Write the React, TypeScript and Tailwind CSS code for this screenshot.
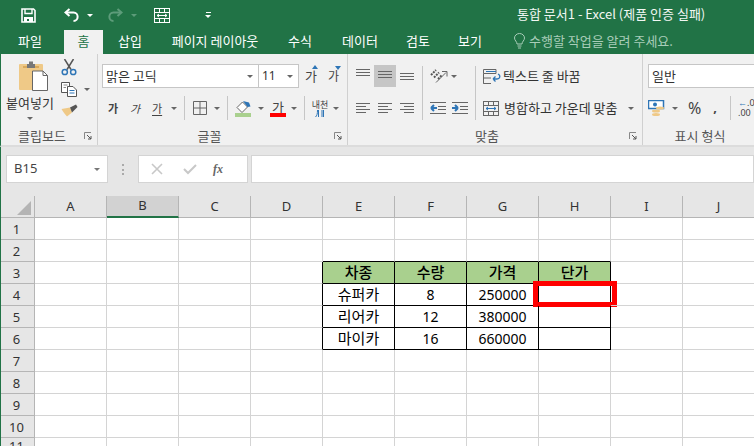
import type { ReactNode } from 'react';

const tabs = [
  { label: '파일', width: 'w-[60px]' },
  { label: '홈', width: 'w-[39px] ml-1', active: true },
  { label: '삽입', width: 'w-[54px]' },
  { label: '페이지 레이아웃', width: 'w-[116px]' },
  { label: '수식', width: 'w-[54px]' },
  { label: '데이터', width: 'w-[66px]' },
  { label: '검토', width: 'w-[50px]' },
  { label: '보기', width: 'w-[54px]' },
];

const columns = ['A', 'B', 'C', 'D', 'E', 'F', 'G', 'H', 'I', 'J'];
const rows = [1, 2, 3, 4, 5, 6, 7, 8, 9, 10, 11];

const tableData: Record<number, string[]> = {
  3: ['차종', '수량', '가격', '단가'],
  4: ['슈퍼카', '8', '250000', ''],
  5: ['리어카', '12', '380000', ''],
  6: ['마이카', '16', '660000', ''],
};

function Caret({ className = 'border-t-[#666]' }: { className?: string }) {
  return <span className={`inline-block w-0 h-0 border-x-[3px] border-x-transparent border-t-[3px] ${className}`} />;
}

function Lines({ rows: lineRows }: { rows: number[] }) {
  return (
    <svg width="16" height="14" viewBox="0 0 16 14" className="shrink-0">
      {lineRows.map((w, i) => (
        <rect key={i} x={w < 0 ? 15 + w : 1} y={2 + i * 3} width={Math.abs(w)} height="1" fill="#666" />
      ))}
    </svg>
  );
}

function GroupLabel({ children, className = '', launcher = false }: { children: ReactNode; className?: string; launcher?: boolean }) {
  return (
    <div className={`relative h-[19px] flex items-center justify-center text-[13px] leading-[16px] text-[#555] ${className}`}>
      {children}
      {launcher && (
        <svg width="8" height="8" viewBox="0 0 8 8" className="absolute right-[5px] top-[6px]">
          <path d="M0.5 7V0.5H7" fill="none" stroke="#888" />
          <path d="M3 3L7 7M7 4V7H4" fill="none" stroke="#555" />
        </svg>
      )}
    </div>
  );
}

function Divider({ className = 'h-[22px] mx-[3px]' }: { className?: string }) {
  return <span className={`w-px bg-[#c6c6c6] shrink-0 ${className}`} />;
}

function SaveIcon() {
  return (
    <svg width="15" height="15" viewBox="0 0 15 15">
      <path d="M1 1H12.5L14 2.5V14H1Z" fill="none" stroke="#fff" strokeWidth="1.6" />
      <path d="M4 1V5.5H11V1" fill="none" stroke="#fff" strokeWidth="1.4" />
      <rect x="3" y="9" width="9" height="5" fill="#fff" />
      <rect x="6" y="11" width="2" height="2" fill="#217346" />
    </svg>
  );
}

function MergeIcon({ stroke, arrow }: { stroke: string; arrow: string }) {
  return (
    <svg width="16" height="15" viewBox="0 0 16 15">
      <rect x="0.5" y="0.5" width="15" height="14" fill="none" stroke={stroke} />
      <path d="M0.5 4.5H15.5M0.5 10.5H15.5M5.5 0.5V4.5M10.5 0.5V4.5M5.5 10.5V14.5M10.5 10.5V14.5" stroke={stroke} />
      <path d="M3 7.5H13M3 7.5L5 6M3 7.5L5 9M13 7.5L11 6M13 7.5L11 9" fill="none" stroke={arrow} />
    </svg>
  );
}

function TitleBar() {
  return (
    <div className="h-[30px] flex items-center relative">
      <div className="w-[21px]" />
      <SaveIcon />
      <svg width="16" height="14" viewBox="0 0 16 14" className="ml-[28px]">
        <path d="M5.5 1L1.5 4.5L5.5 8" fill="none" stroke="#fff" strokeWidth="2" />
        <path d="M2 4.5H9.5C15 4.5 15 13 9.5 13" fill="none" stroke="#fff" strokeWidth="2" />
      </svg>
      <span className="ml-[7px] flex"><Caret className="border-t-white" /></span>
      <svg width="16" height="14" viewBox="0 0 16 14" className="ml-[14px]">
        <path d="M10.5 1L14.5 4.5L10.5 8" fill="none" stroke="#5d9c7a" strokeWidth="2" />
        <path d="M14 4.5H6.5C1 4.5 1 13 6.5 13" fill="none" stroke="#5d9c7a" strokeWidth="2" />
      </svg>
      <span className="ml-[8px] flex"><Caret className="border-t-[#5d9c7a]" /></span>
      <span className="ml-[17px] flex"><MergeIcon stroke="#fff" arrow="#fff" /></span>
      <div className="ml-[35px] flex flex-col items-center gap-[2px]">
        <span className="w-[5px] h-px bg-white" />
        <Caret className="border-t-white" />
      </div>
      <span className="ml-[306px] pb-[2px] text-[13px] text-[#f2f7f4] whitespace-nowrap">통합 문서1 - Excel (제품 인증 실패)</span>
    </div>
  );
}

function TabRow() {
  return (
    <div className="h-[24px] flex text-[13px] text-white">
      {tabs.map((t) => (
        <div
          key={t.label}
          className={`${t.width} shrink-0 flex items-center justify-center pb-[2px] whitespace-nowrap ${t.active ? 'bg-[#f1f1f1] text-[#217346]' : ''}`}
        >
          {t.label}
        </div>
      ))}
      <div className="flex items-center ml-[16px] pb-[2px] text-[#a9cdb9] whitespace-nowrap">
        <svg width="13" height="16" viewBox="0 0 13 16" className="mr-[3px]">
          <path d="M4 11C4 8.5 1.5 7.5 1.5 5A5 4.5 0 0 1 11.5 5C11.5 7.5 9 8.5 9 11Z" fill="none" stroke="#a9cdb9" />
          <path d="M4.5 13H8.5M5 15H8" stroke="#a9cdb9" />
        </svg>
        수행할 작업을 알려 주세요.
      </div>
    </div>
  );
}

function ClipboardGroup() {
  return (
    <div className="w-[97px] shrink-0 border-r border-[#d0d0d0] flex flex-col">
      <div className="h-[74px] flex">
        <div className="w-[58px] flex flex-col items-center pt-[7px]">
          <svg width="30" height="30" viewBox="0 0 30 30" className="ml-[5px]">
            <rect x="1" y="3" width="24" height="26" rx="1" fill="#efc987" />
            <rect x="5" y="5" width="16" height="2" fill="#d9a95c" />
            <path d="M9 3H11V0.5H15V3H17V7H9Z" fill="#777" />
            <path d="M14.5 10H25L29.5 14.5V29.5H14.5Z" fill="#fff" stroke="#666" />
            <path d="M25 10V14.5H29.5" fill="none" stroke="#666" />
          </svg>
          <span className="text-[13px] leading-[16px] text-[#333] mt-[4px] whitespace-nowrap">붙여넣기</span>
          <span className="mt-[6px] flex"><Caret /></span>
        </div>
        <div className="flex flex-col pt-[5px] gap-[6px] ml-[2px]">
          <svg width="16" height="17" viewBox="0 0 16 17">
            <path d="M3.5 0L10 10.5M12.5 0L6 10.5" stroke="#555" strokeWidth="1.5" />
            <circle cx="3.8" cy="13" r="2.6" fill="none" stroke="#2e75b6" strokeWidth="1.5" />
            <circle cx="12.2" cy="13" r="2.6" fill="none" stroke="#2e75b6" strokeWidth="1.5" />
          </svg>
          <div className="flex items-center gap-[7px]">
            <svg width="16" height="15" viewBox="0 0 16 15">
              <path d="M0.5 0.5H8.5V10.5H0.5Z" fill="#fff" stroke="#555" />
              <path d="M2.5 3H6.5M2.5 5.5H5" stroke="#888" />
              <path d="M6.5 4.5H12L15.5 8V14.5H6.5Z" fill="#fff" stroke="#555" />
              <path d="M8.5 8.5H13.5M8.5 11H13.5" stroke="#2e75b6" />
            </svg>
            <Caret />
          </div>
          <svg width="17" height="13" viewBox="0 0 17 13" className="mt-[1px]">
            <path d="M0.5 5L9 3.5L11 8.5L6 12.5C4 10 2 8 0.5 5Z" fill="#efc987" />
            <path d="M9 3.5L15 0.5L16.5 3L11 8.5Z" fill="#555" />
          </svg>
        </div>
      </div>
      <GroupLabel launcher className="pr-[14px]">클립보드</GroupLabel>
    </div>
  );
}

function FontGroup() {
  return (
    <div className="w-[250px] shrink-0 border-r border-[#d0d0d0] flex flex-col">
      <div className="h-[74px] pl-[4px]">
        <div className="flex items-center h-[24px] mt-[10px]">
          <div className="w-[157px] h-[24px] bg-white border border-[#c6c6c6] flex items-center pl-[3px] text-[13px] text-[#333]">
            <span className="flex-1">맑은 고딕</span>
            <span className="mr-[5px] flex"><Caret /></span>
          </div>
          <div className="w-[40px] h-[24px] bg-white border border-l-0 border-[#c6c6c6] flex items-center pl-[3px] text-[12px] text-[#333]">
            <span className="flex-1 font-['Noto_Sans']">11</span>
            <span className="mr-[5px] flex"><Caret /></span>
          </div>
          <span className="ml-[6px] text-[13px] text-[#444] relative w-[14px]">
            가
            <span className="absolute left-[7px] -top-[1px] w-0 h-0 border-x-[3px] border-x-transparent border-b-[4px] border-b-[#2e75b6]" />
          </span>
          <span className="ml-[9px] text-[12px] text-[#444] relative w-[14px]">
            가
            <span className="absolute left-[7px] -top-[1px] w-0 h-0 border-x-[3px] border-x-transparent border-t-[4px] border-t-[#2e75b6]" />
          </span>
        </div>
        <div className="flex items-center h-[24px] mt-[8px] text-[11px] text-[#444]">
          <span className="ml-[6px] w-[22px] font-bold">가</span>
          <span className="w-[22px] italic">가</span>
          <span className="w-[19px] underline underline-offset-2">가</span>
          <Caret />
          <Divider className="h-[24px] ml-[7px] mr-[8px]" />
          <svg width="14" height="14" viewBox="0 0 14 14">
            <path d="M0.5 0.5H13.5V13.5H0.5ZM7 0.5V13.5M0.5 7H13.5" fill="none" stroke="#666" />
          </svg>
          <span className="ml-[7px] flex"><Caret /></span>
          <Divider className="h-[24px] ml-[7px] mr-[7px]" />
          <svg width="17" height="17" viewBox="0 0 17 17">
            <path d="M2 7.5L7.5 2L12.5 7L7 12.5Z" fill="#fff" stroke="#666" />
            <path d="M8 1L14 2.5L15.5 6.5L12.5 7Z" fill="#2e75b6" />
            <rect x="0" y="13" width="16" height="4" fill="#a9d08e" />
          </svg>
          <span className="ml-[6px] flex"><Caret /></span>
          <div className="ml-[6px] w-[16px] flex flex-col items-center text-[13px] leading-[13px] text-[#444]">
            가
            <span className="w-[16px] h-[4px] bg-[#ff0000]" />
          </div>
          <span className="ml-[5px] flex"><Caret /></span>
          <Divider className="h-[24px] ml-[7px] mr-[7px]" />
          <div className="flex flex-col items-center w-[16px] text-[9px] leading-[10px] text-[#444] whitespace-nowrap">
            내천
            <svg width="10" height="7" viewBox="0 0 10 7">
              <path d="M2.5 0C2.5 4 2 5.500 0.500 7M3.500 0V7M7 0V7M8.500 0V7" fill="none" stroke="#2e75b6" />
            </svg>
          </div>
          <span className="ml-[5px] flex"><Caret /></span>
        </div>
      </div>
      <GroupLabel launcher className="pr-[26px]">글꼴</GroupLabel>
    </div>
  );
}

function AlignGroup() {
  return (
    <div className="w-[295px] shrink-0 border-r border-[#d0d0d0] flex flex-col">
      <div className="h-[74px] flex pl-[4px]">
        <div className="flex flex-col pt-[10px] gap-[8px]">
          <div className="flex items-center h-[24px]">
            <span className="w-[22px] flex justify-center"><span className="-mt-[4px] flex"><Lines rows={[14, 14, 14]} /></span></span>
            <span className="w-[22px] h-[22px] bg-[#c6c6c6] flex items-center justify-center"><Lines rows={[14, 14, 14]} /></span>
            <span className="w-[22px] flex justify-center"><span className="mt-[4px] flex"><Lines rows={[14, 14, 14]} /></span></span>
          </div>
          <div className="flex items-center h-[24px]">
            <span className="w-[22px] flex justify-center"><Lines rows={[14, 10, 14, 10]} /></span>
            <span className="w-[22px] flex justify-center"><Lines rows={[14, 10, 14, 10]} /></span>
            <span className="w-[22px] flex justify-center"><Lines rows={[-14, -10, -14, -10]} /></span>
          </div>
        </div>
        <Divider className="h-[54px] mt-[12px] ml-[4px] mr-[7px]" />
        <div className="flex flex-col pt-[10px] gap-[8px] w-[45px]">
          <div className="flex items-center h-[24px] gap-[3px]">
            <svg width="18" height="16" viewBox="0 0 18 16">
              <path d="M6 14.500L16 4.500M12 3.500H17V8.500" fill="none" stroke="#666" />
              <path d="M1 7L6 2M4 9.500L9 4.500M8 11L12 7" fill="none" stroke="#555" strokeWidth="2" strokeDasharray="2 1" />
            </svg>
            <Caret />
          </div>
          <div className="flex items-center h-[24px] gap-[6px]">
            <svg width="16" height="12" viewBox="0 0 16 12">
              <path d="M0 0.500H16M8 4.500H16M8 7.500H16M0 11.500H16" stroke="#666" />
              <path d="M7 6H1M1 6L4 3M1 6L4 9" fill="none" stroke="#2e75b6" strokeWidth="2" />
            </svg>
            <svg width="16" height="12" viewBox="0 0 16 12">
              <path d="M0 0.500H16M8 4.500H16M8 7.500H16M0 11.500H16" stroke="#666" />
              <path d="M0 6H6M6 6L3 3M6 6L3 9" fill="none" stroke="#2e75b6" strokeWidth="2" />
            </svg>
          </div>
        </div>
        <Divider className="h-[54px] mt-[12px] ml-[0px] mr-[7px]" />
        <div className="flex flex-col pt-[10px] gap-[8px] text-[13px] text-[#333] whitespace-nowrap">
          <div className="flex items-center h-[24px] gap-[2px]">
            <svg width="18" height="15" viewBox="0 0 18 15">
              <path d="M0.500 0.500H13V4.500H0.500ZM0.500 4.500V14.500H8M0.500 9H8M0.500 14.500H8" fill="none" stroke="#666" />
              <path d="M3 2.500H13" stroke="#2e75b6" />
              <path d="M15 5C18 6.500 17 10 14 10H10M10 10L12.500 7.500M10 10L12.500 12.500" fill="none" stroke="#2e75b6" strokeWidth="1.3" />
            </svg>
            텍스트 줄 바꿈
          </div>
          <div className="flex items-center h-[24px] gap-[5px]">
            <span className="flex"><MergeIcon stroke="#666" arrow="#2e75b6" /></span>
            <span>병합하고 가운데 맞춤</span>
            <span className="ml-[6px] flex"><Caret /></span>
          </div>
        </div>
      </div>
      <GroupLabel launcher className="pr-[16px]">맞춤</GroupLabel>
    </div>
  );
}

function NumberGroup() {
  return (
    <div className="flex-1 flex flex-col pl-[5px]">
      <div className="h-[74px]">
        <div className="w-[120px] h-[24px] mt-[10px] bg-white border border-[#c6c6c6] flex items-center pl-[3px] text-[13px] text-[#333]">일반</div>
        <div className="flex items-center h-[24px] mt-[8px] text-[#444]">
          <svg width="17" height="17" viewBox="0 0 17 17">
            <rect x="0.500" y="0.500" width="15" height="8" fill="#fff" stroke="#2e75b6" strokeWidth="1.500" />
            <circle cx="7" cy="4.500" r="2" fill="#2e75b6" />
            <ellipse cx="12" cy="8" rx="4" ry="1.500" fill="#efc987" />
            <ellipse cx="8" cy="11" rx="4" ry="1.500" fill="#efc987" />
            <ellipse cx="8" cy="14.500" rx="4" ry="1.500" fill="#efc987" />
          </svg>
          <span className="ml-[7px] flex"><Caret /></span>
          <span className="ml-[10px] text-[16px] font-['Noto_Sans']">%</span>
          <span className="ml-[12px] text-[13px] font-bold font-['Noto_Sans']">,</span>
          <Divider className="h-[24px] ml-[13px] mr-[7px]" />
          <div className="text-[9px] leading-[10px] font-['Noto_Sans'] whitespace-nowrap">
            <div><span className="text-[#2e75b6]">←</span>.0</div>
            <div>.00</div>
          </div>
        </div>
      </div>
      <GroupLabel className="w-[112px] pr-[8px]">표시 형식</GroupLabel>
    </div>
  );
}

function FormulaBar() {
  return (
    <div className="h-[49px] bg-[#e6e6e6] flex pt-[8px] pl-[5px]">
      <div className="w-[102px] h-[28px] bg-white border border-[#d4d4d4] flex items-center justify-between pl-[7px] pr-[7px] text-[13px] text-[#444] font-['Noto_Sans']">
        B15
        <Caret className="border-t-[#777]" />
      </div>
      <div className="w-[30px] h-[28px] flex items-center justify-center">
        <span className="w-[2px] h-[11px] border-l-2 border-dotted border-[#aaa]" />
      </div>
      <div className="w-[110px] h-[28px] bg-white border border-[#d4d4d4] flex items-center">
        <svg width="12" height="12" viewBox="0 0 12 12" className="ml-[12px]">
          <path d="M1 1L11 11M11 1L1 11" stroke="#c8c8c8" strokeWidth="1.6" />
        </svg>
        <svg width="14" height="12" viewBox="0 0 14 12" className="ml-[20px]">
          <path d="M1 6L5 10L13 2" fill="none" stroke="#c8c8c8" strokeWidth="2" />
        </svg>
        <span className="ml-[16px] text-[12px] italic font-bold text-[#666] font-['Liberation_Serif']">fx</span>
      </div>
      <div className="flex-1 h-[28px] ml-[3px] bg-white border border-[#d4d4d4]" />
    </div>
  );
}

function cellBorder(row: number, col: number): string {
  const inTable = col >= 4 && col <= 7 && row >= 3 && row <= 6;
  const right = inTable || (col === 3 && row >= 3 && row <= 6) ? 'border-r-black' : 'border-r-[#d4d4d4]';
  const bottom = inTable || (row === 2 && col >= 4 && col <= 7) ? 'border-b-black' : 'border-b-[#d4d4d4]';
  return `${right} ${bottom}`;
}

function Sheet() {
  return (
    <div className="grid grid-cols-[34px_repeat(10,72px)] grid-rows-[22px] auto-rows-[22px] bg-white font-['Noto_Sans','Noto_Sans_CJK_KR',sans-serif]">
      <div className="bg-[#e6e6e6] border-r border-b border-[#b5b5b5] flex items-end justify-end pr-[3px] pb-[2px]">
        <svg width="14" height="14" viewBox="0 0 14 14">
          <path d="M14 0V14H0Z" fill="#b4b4b4" />
        </svg>
      </div>
      {columns.map((c) => (
        <div
          key={c}
          className={`flex items-center justify-center text-[13px] text-[#333] border-r border-[#b5b5b5] ${
            c === 'B' ? 'bg-[#d2d2d2] text-[#1e6b41] border-b-2 border-b-[#217346]' : 'bg-[#e6e6e6] border-b'
          }`}
        >
          {c}
        </div>
      ))}
      {rows.map((r) => (
        <div key={r} className="contents">
          <div className={`bg-[#e6e6e6] border-r border-b border-[#b5b5b5] flex justify-center text-[13px] leading-[16px] text-[#333] pr-[2px] ${r === 11 ? 'items-start' : 'items-center'}`}>
            {r}
          </div>
          {columns.map((c, i) => {
            const value = i >= 4 && i <= 7 ? tableData[r]?.[i - 4] : undefined;
            const isHead = r === 3 && i >= 4 && i <= 7;
            const isKorean = i === 4 || isHead;
            return (
              <div
                key={c}
                className={`relative border-r border-b flex items-center justify-center text-black leading-none ${cellBorder(r, i)} ${
                  isKorean ? 'text-[15px]' : 'text-[14px]'
                } ${isHead ? 'bg-[#a9d08e] font-medium' : ''}`}
              >
                {value}
                {r === 4 && c === 'H' && (
                  <span className="absolute -left-[6px] -top-[3px] w-[84px] h-[26px] border-[5px] border-[#ff0000]" />
                )}
              </div>
            );
          })}
        </div>
      ))}
    </div>
  );
}

export default function App() {
  return (
    <div className="w-[754px] h-[446px] overflow-hidden bg-white font-['Noto_Sans_CJK_KR','Noto_Sans',sans-serif]">
      <div className="bg-[#217346]">
        <TitleBar />
        <TabRow />
      </div>
      <div className="h-[93px] bg-[#f1f1f1] border-b-2 border-[#dcdcdc] border-l border-l-[#217346] flex">
        <ClipboardGroup />
        <FontGroup />
        <AlignGroup />
        <NumberGroup />
      </div>
      <div className="border-l border-l-[#217346]">
        <FormulaBar />
        <Sheet />
      </div>
    </div>
  );
}
